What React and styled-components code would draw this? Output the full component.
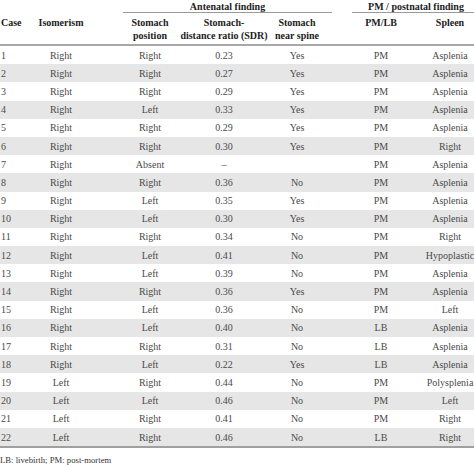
import React from 'react';
import styled, { createGlobalStyle } from 'styled-components';

const GlobalStyle = createGlobalStyle`
  html, body {
    margin: 0;
    padding: 0;
    background: #fff;
  }
  body {
    font-family: 'Liberation Serif', 'Times New Roman', serif;
  }
`;

const rows = [
  ['1', 'Right', 'Right', '0.23', 'Yes', 'PM', 'Asplenia'],
  ['2', 'Right', 'Right', '0.27', 'Yes', 'PM', 'Asplenia'],
  ['3', 'Right', 'Right', '0.29', 'Yes', 'PM', 'Asplenia'],
  ['4', 'Right', 'Left', '0.33', 'Yes', 'PM', 'Asplenia'],
  ['5', 'Right', 'Right', '0.29', 'Yes', 'PM', 'Asplenia'],
  ['6', 'Right', 'Right', '0.30', 'Yes', 'PM', 'Right'],
  ['7', 'Right', 'Absent', '–', '', 'PM', 'Asplenia'],
  ['8', 'Right', 'Right', '0.36', 'No', 'PM', 'Asplenia'],
  ['9', 'Right', 'Left', '0.35', 'Yes', 'PM', 'Asplenia'],
  ['10', 'Right', 'Left', '0.30', 'Yes', 'PM', 'Asplenia'],
  ['11', 'Right', 'Right', '0.34', 'No', 'PM', 'Right'],
  ['12', 'Right', 'Left', '0.41', 'No', 'PM', 'Hypoplastic'],
  ['13', 'Right', 'Left', '0.39', 'No', 'PM', 'Asplenia'],
  ['14', 'Right', 'Right', '0.36', 'Yes', 'PM', 'Asplenia'],
  ['15', 'Right', 'Left', '0.36', 'No', 'PM', 'Left'],
  ['16', 'Right', 'Left', '0.40', 'No', 'LB', 'Asplenia'],
  ['17', 'Right', 'Right', '0.31', 'No', 'LB', 'Asplenia'],
  ['18', 'Right', 'Left', '0.22', 'Yes', 'LB', 'Asplenia'],
  ['19', 'Left', 'Right', '0.44', 'No', 'PM', 'Polysplenia'],
  ['20', 'Left', 'Left', '0.46', 'No', 'PM', 'Left'],
  ['21', 'Left', 'Right', '0.41', 'No', 'PM', 'Right'],
  ['22', 'Left', 'Right', '0.46', 'No', 'LB', 'Right'],
];

const COLS = '12px 98px 80px 68px 78px 90px 48px';

const Page = styled.div`
  width: 474px;
  height: 466px;
  overflow: hidden;
  display: flex;
  flex-direction: column;
`;

const GroupRow = styled.div`
  display: grid;
  grid-template-columns: ${COLS};
  height: 14px;
`;

const Group = styled.div`
  grid-column: ${p => p.$span};
  margin-left: ${p => p.$left}px;
  margin-right: ${p => p.$right}px;
  border-bottom: 1.5px solid #9a9a9a;
  display: flex;
  justify-content: center;
  align-items: center;
  font-size: 10px;
  font-weight: bold;
  color: #222;
  white-space: nowrap;
  height: 12px;
  padding-left: ${p => p.$shift}px;
`;

const HeadRow = styled.div`
  display: grid;
  grid-template-columns: ${COLS};
  height: 30px;
  border-bottom: 2px solid #a8a8a8;
`;

const HeadCell = styled.div`
  display: flex;
  flex-direction: column;
  align-items: ${p => (p.$left ? 'flex-start' : 'center')};
  padding-left: ${p => (p.$left ? '1px' : '0')};
  padding-top: 3px;
  font-size: 10px;
  font-weight: bold;
  line-height: 12.5px;
  color: #222;
  white-space: nowrap;
`;

const Body = styled.div`
  border-bottom: 2px solid #a0a0a0;
`;

const Row = styled.div`
  display: grid;
  grid-template-columns: ${COLS};
  height: 18.2px;
  align-items: center;
  background: ${p => (p.$shaded ? '#e6e6e6' : '#fff')};
`;

const Cell = styled.div`
  display: flex;
  justify-content: ${p => (p.$left ? 'flex-start' : 'center')};
  padding-left: ${p => (p.$left ? '1px' : '0')};
  font-size: 10px;
  color: #4a4a4a;
  white-space: nowrap;
`;

const Note = styled.div`
  margin-top: 7px;
  padding-left: 0;
  font-size: 8.7px;
  color: #333;
  white-space: nowrap;
`;

const headers = [
  ['Case'],
  ['Isomerism'],
  ['Stomach', 'position'],
  ['Stomach-', 'distance ratio (SDR)'],
  ['Stomach', 'near spine'],
  ['PM/LB'],
  ['Spleen'],
];

export default function App() {
  return (
    <>
      <GlobalStyle />
      <Page>
        <GroupRow>
          <Group $span="3 / 6" $left={13} $right={4} $shift={0}>Antenatal finding</Group>
          <Group $span="6 / 8" $left={16} $right={0} $shift={6}>PM / postnatal finding</Group>
        </GroupRow>
        <HeadRow>
          {headers.map((lines, i) => (
            <HeadCell key={i} $left={i === 0}>
              {lines.map(l => <span key={l}>{l}</span>)}
            </HeadCell>
          ))}
        </HeadRow>
        <Body>
          {rows.map((r, i) => (
            <Row key={r[0]} $shaded={i % 2 === 1}>
              {r.map((v, j) => (
                <Cell key={j} $left={j === 0}>{v}</Cell>
              ))}
            </Row>
          ))}
        </Body>
        <Note>LB: livebirth; PM: post-mortem</Note>
      </Page>
    </>
  );
}
